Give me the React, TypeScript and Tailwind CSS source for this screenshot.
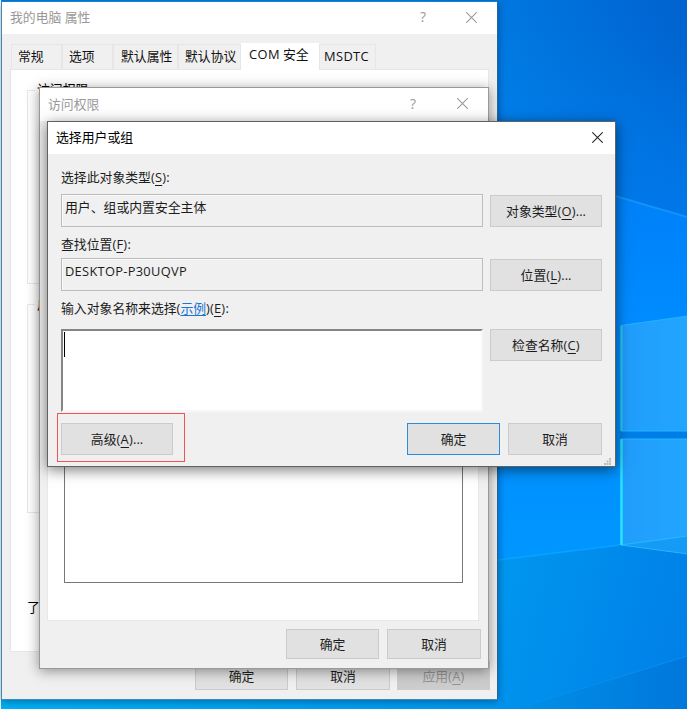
import React from 'react';

const Key = ({ k }: { k: string }) => (
  <span className="tracking-[0.25px]">(<span className="underline underline-offset-[3px] decoration-1">{k}</span>)</span>
);

const Button = ({ className = '', children }: { className?: string; children: React.ReactNode }) => (
  <button className={`flex shrink-0 items-center justify-center border border-[#cbcbcb] bg-[#e1e1e1] text-[#1c1c1c] ${className}`}>
    <span className="whitespace-pre">{children}</span>
  </button>
);

const Close = ({ color }: { color: string }) => (
  <svg width="11" height="11" viewBox="0 0 11 11" fill="none" stroke={color} strokeWidth="1.05">
    <path d="M.3.3 10.7 10.7M10.7.3.3 10.7" />
  </svg>
);

const Wallpaper = () => (
  <svg className="absolute left-px top-0" width="686" height="709" viewBox="1 0 686 709">
    <defs>
      <linearGradient id="sky" x1="497" y1="130" x2="687" y2="20" gradientUnits="userSpaceOnUse">
        <stop offset="0" stopColor="#0080e6" />
        <stop offset="1" stopColor="#0063d0" />
      </linearGradient>
      <linearGradient id="skyDown" x1="0" y1="60" x2="0" y2="240" gradientUnits="userSpaceOnUse">
        <stop offset="0" stopColor="#0078ec" stopOpacity="0" />
        <stop offset="1" stopColor="#0078ec" />
      </linearGradient>
      <linearGradient id="beam" x1="0" y1="190" x2="0" y2="560" gradientUnits="userSpaceOnUse">
        <stop offset="0" stopColor="#0080f8" />
        <stop offset=".35" stopColor="#008bff" />
        <stop offset="1" stopColor="#0096ff" />
      </linearGradient>
      <linearGradient id="floor" x1="497" y1="600" x2="687" y2="650" gradientUnits="userSpaceOnUse">
        <stop offset="0" stopColor="#0096ee" />
        <stop offset="1" stopColor="#0080e8" />
      </linearGradient>
      <linearGradient id="corner" x1="530" y1="700" x2="687" y2="700" gradientUnits="userSpaceOnUse">
        <stop offset="0" stopColor="#008ee6" />
        <stop offset="1" stopColor="#0077dc" />
      </linearGradient>
      <linearGradient id="strip" x1="0" y1="0" x2="500" y2="0" gradientUnits="userSpaceOnUse">
        <stop offset="0" stopColor="#00b2f6" />
        <stop offset="1" stopColor="#0098ef" />
      </linearGradient>
      <linearGradient id="pane" x1="620" y1="0" x2="687" y2="0" gradientUnits="userSpaceOnUse">
        <stop offset="0" stopColor="#219cfb" />
        <stop offset="1" stopColor="#22a6ff" />
      </linearGradient>
    </defs>
    <rect width="687" height="709" fill="url(#sky)" />
    <rect y="60" width="687" height="300" fill="url(#skyDown)" />
    <path d="M490 160 616 196 687 217V545L620 545 490 561Z" fill="url(#beam)" />
    <path d="M615 196 687 217" stroke="#1292fb" strokeWidth="2" />
    <path d="M490 561 620 545 687 536V709H490Z" fill="url(#floor)" />
    <path d="M490 561 620 545" stroke="#0ba2ff" strokeWidth="1.5" />
    <path d="M516 709 687 656V709Z" fill="url(#corner)" />
    <path d="M516 709 687 656" stroke="#088ff0" />
    <rect y="696" width="500" height="13" fill="url(#strip)" />
    <path d="M620 431H687V439H620Z" fill="#007ee8" />
    <path d="M621 325.500 688 316V431H621Z" fill="url(#pane)" stroke="#24b3fc" />
    <path d="M621 439H688V536L621 545Z" fill="url(#pane)" stroke="#24b8fc" />
    <path d="M621 545 688 536V554Z" fill="#159bf5" stroke="#26b6fb" />
    <path d="M621.500 326V431" stroke="#23c9f3" strokeWidth="2" />
    <path d="M621.500 439V545" stroke="#25e3fa" strokeWidth="2.500" />
  </svg>
);

const Tab = ({ className, children }: { className: string; children: React.ReactNode }) => (
  <div className={`h-[25px] shrink-0 whitespace-pre border border-b-0 border-[#e6e6e6] bg-[#f0f0f0] leading-[23px] ${className}`}>{children}</div>
);

const PropertiesWindow = () => (
  <section className="absolute left-px top-px flex h-[699px] w-[497px] flex-col border border-[#3b8bb7] border-t-[#1682cf] border-r-[#24679f] bg-[#f0f0f0] shadow-[0_2px_8px_rgba(0,20,60,0.4)]">
    <header className="flex h-8 shrink-0 items-center bg-white pb-0.5 pl-2 text-[#999]">
      <span className="w-[410px] whitespace-pre">我的电脑 属性</span>
      <span className="w-[46px] text-[14px]">?</span>
      <Close color="#999" />
    </header>
    <nav className="flex h-[35px] shrink-0 items-end pl-[9px] text-[#111]">
      <Tab className="w-[51px] pl-[6px]">常规</Tab>
      <Tab className="w-[51px] pl-[6px]">选项</Tab>
      <Tab className="w-[65px] pl-[7px]">默认属性</Tab>
      <Tab className="w-[63px] pl-[6px]">默认协议</Tab>
      <div className="z-10 -mb-px h-[27px] w-[78px] whitespace-pre bg-white pl-2 leading-[23px]"><span className="tracking-[0.4px]">COM</span><span className="tracking-[-0.2px]"> </span>安全</div>
      <Tab className="w-[57px] pl-1"><span className="tracking-[0.4px]">MSDTC</span></Tab>
    </nav>
    <main className="ml-2 h-[583px] w-[479px] shrink-0 border border-[#e6e6e6] bg-white pl-4 pt-[12px]">
      <div className="relative mt-[8px] h-[194px] w-[440px] border border-[#e8e8e8]">
        <span className="absolute -top-[12px] left-[7px] bg-white px-[2px] leading-5">访问权限</span>
      </div>
      <div className="relative mt-[20px] h-[209px] w-[440px] border border-[#e8e8e8]">
        <span className="absolute -top-[11px] left-[7px] bg-white px-[2px] leading-5">启</span>
      </div>
      <p className="mt-[84px] leading-5">了</p>
    </main>
    <footer className="mt-[9px] flex pl-[193px]">
      <Button className="h-[29px] w-[93px]">确定</Button>
      <Button className="ml-2 h-[29px] w-[94px]">取消</Button>
      <Button className="ml-[7px] h-[29px] w-[93px] border-[#ccc]! bg-[#ccc]! text-[#939393]!">应用<Key k="A" /></Button>
    </footer>
  </section>
);

const PermissionWindow = () => (
  <section className="absolute left-[39px] top-[87px] flex h-[582px] w-[450px] flex-col border border-[#999] bg-[#f0f0f0] shadow-[0_2px_12px_rgba(0,0,0,0.42)]">
    <header className="flex h-[33px] shrink-0 items-center bg-white pb-0.5 pl-2 text-[#999]">
      <span className="w-[362px]">访问权限</span>
      <span className="w-[47px] text-[14px]">?</span>
      <Close color="#999" />
    </header>
    <main className="ml-[7px] h-[500px] w-[432px] shrink-0 border border-[#e8e8e8] bg-white pl-4 pt-4">
      <div className="h-[445px] w-[399px] border border-[#777]" />
    </main>
    <footer className="mt-2 flex pl-[246px]">
      <Button className="h-[30px] w-[93px]">确定</Button>
      <Button className="ml-2 h-[30px] w-[94px]">取消</Button>
    </footer>
  </section>
);

const SelectWindow = () => (
  <section className="absolute left-[47px] top-[121px] flex h-[346px] w-[569px] flex-col border border-[#626262] bg-[#f0f0f0] text-[#1c1c1c] shadow-[0_3px_13px_rgba(0,0,0,0.52)]">
    <header className="flex h-8 shrink-0 items-center bg-white pb-0.5 pl-2 text-black">
      <span className="w-[536px]">选择用户或组</span>
      <Close color="#222" />
    </header>
    <main className="flex flex-col pl-[13px]">
      <label className="mt-[13px] h-[27px] leading-5">选择此对象类型<Key k="S" />:</label>
      <div className="flex items-start">
        <div className="h-[33px] w-[422px] border border-[#bcbcbc] pl-[3px] leading-[24px] shadow-[inset_1px_1px_#fafafa]">用户、组或内置安全主体</div>
        <Button className="ml-[7px] mt-px h-8 w-[112px]">对象类型<Key k="O" />...</Button>
      </div>
      <label className="mt-[7px] h-6 leading-5">查找位置<Key k="F" />:</label>
      <div className="flex items-start">
        <div className="h-[33px] w-[422px] border border-[#bcbcbc] pl-[3px] leading-[24px] tracking-[0.3px] shadow-[inset_1px_1px_#fafafa]">DESKTOP-P30UQVP</div>
        <Button className="ml-[7px] mt-px h-8 w-[112px]">位置<Key k="L" />...</Button>
      </div>
      <label className="mt-[7px] h-[31px] leading-5">输入对象名称来选择(<span className="text-[#1a74d6] underline underline-offset-2">示例</span>)<Key k="E" />:</label>
      <div className="flex items-start">
        <div className="h-[83px] w-[422px] border-2 border-b-[#f7f7f7] border-l-[#858585] border-r-[#f7f7f7] border-t-[#858585] bg-white pl-px pt-px">
          <div className="h-[25px] w-px bg-black" />
        </div>
        <Button className="ml-[7px] h-8 w-[112px]">检查名称<Key k="C" /></Button>
      </div>
      <div className="-ml-1 mt-px flex items-center">
        <div className="flex h-[49px] w-[128px] items-center border border-[#f05353] pl-[3px] pt-[3px]">
          <Button className="h-8 w-[112px]">高级<Key k="A" />...</Button>
        </div>
        <Button className="ml-[222px] mt-[3px] h-8 w-[93px] border-[#2b8cdb]!">确定</Button>
        <Button className="ml-2 mt-[3px] h-8 w-[94px]">取消</Button>
      </div>
    </main>
    <svg className="absolute bottom-px right-[4px]" width="7" height="7" fill="#bfbfbf">
      <path d="M5 0H7V2H5ZM2.500 2.500h2v2h-2ZM5 2.500h2v2H5ZM0 5h2v2H0ZM2.500 5h2v2h-2ZM5 5h2v2H5Z" />
    </svg>
  </section>
);

export default function App() {
  return (
    <div className="relative h-[710px] w-[687px] overflow-hidden bg-white font-['Open_Sans','Noto_Sans_CJK_SC',sans-serif] text-[12.85px] leading-5">
      <Wallpaper />
      <PropertiesWindow />
      <PermissionWindow />
      <SelectWindow />
    </div>
  );
}
